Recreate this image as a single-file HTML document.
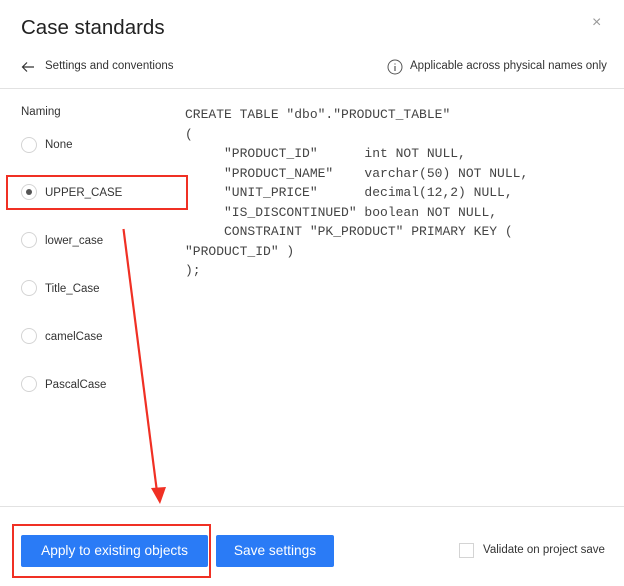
<!DOCTYPE html>
<html><head><meta charset="utf-8"><style>
*{box-sizing:border-box;margin:0;padding:0}
body{width:624px;height:586px;background:#fff;font-family:"Liberation Sans",sans-serif;color:#333;position:relative;overflow:hidden}
.a{position:absolute;white-space:nowrap}
.r{position:absolute;left:21px;width:16px;height:16px;border:1px solid #d4d4d4;border-radius:50%}
.l{position:absolute;left:45px;font-size:11.5px;color:#333}
pre{position:absolute;left:185px;top:105px;font-family:"Liberation Mono",monospace;font-size:13px;line-height:19.5px;color:#444}
.btn{position:absolute;top:535px;height:32px;background:#2a7bf6;color:#fff;font-size:13.7px;border-radius:2px;text-align:center;line-height:32px}
</style></head><body>
<div class="a" style="left:21px;top:16px;font-size:20.5px;color:#222">Case standards</div>
<div class="a" style="left:592px;top:14px;font-size:16px;color:#999">×</div>
<svg class="a" style="left:21px;top:61px" width="14" height="12"><path d="M13 6H2M6 1.5L1.5 6 6 10.5" stroke="#333" stroke-width="1.2" fill="none"/></svg>
<div class="a" style="left:45px;top:60px;font-size:11.5px">Settings and conventions</div>
<svg class="a" style="left:387px;top:59px" width="16" height="16"><circle cx="8" cy="8" r="7" stroke="#555" fill="none"/><path d="M8 7v5M8 4.5v1" stroke="#555" stroke-width="1.2"/></svg>
<div class="a" style="left:410px;top:60px;font-size:11.5px">Applicable across physical names only</div>
<div class="a" style="left:0;top:88px;width:624px;height:1px;background:#e2e2e2"></div>
<div class="a" style="left:21px;top:106px;font-size:11.5px">Naming</div>
<div class="r" style="top:137px"></div><div class="l" style="top:139px">None</div>
<div class="r" style="top:184px"><div style="position:absolute;left:4px;top:4px;width:6px;height:6px;border-radius:50%;background:#555"></div></div><div class="l" style="top:187px">UPPER_CASE</div>
<div class="r" style="top:232px"></div><div class="l" style="top:235px">lower_case</div>
<div class="r" style="top:280px"></div><div class="l" style="top:283px">Title_Case</div>
<div class="r" style="top:328px"></div><div class="l" style="top:331px">camelCase</div>
<div class="r" style="top:376px"></div><div class="l" style="top:379px">PascalCase</div>
<pre>CREATE TABLE "dbo"."PRODUCT_TABLE"
(
     "PRODUCT_ID"      int NOT NULL,
     "PRODUCT_NAME"    varchar(50) NOT NULL,
     "UNIT_PRICE"      decimal(12,2) NULL,
     "IS_DISCONTINUED" boolean NOT NULL,
     CONSTRAINT "PK_PRODUCT" PRIMARY KEY (
"PRODUCT_ID" )
);</pre>
<div class="a" style="left:6px;top:175px;width:182px;height:35px;border:2px solid #f03024"></div>
<div class="a" style="left:0;top:506px;width:624px;height:1px;background:#e2e2e2"></div>
<div class="btn" style="left:21px;width:187px">Apply to existing objects</div>
<div class="btn" style="left:216px;width:118px">Save settings</div>
<div class="a" style="left:12px;top:524px;width:199px;height:54px;border:2px solid #f03024"></div>
<div class="a" style="left:459px;top:543px;width:15px;height:15px;border:1px solid #d4d4d4"></div>
<div class="a" style="left:483px;top:544px;font-size:11.5px">Validate on project save</div>
<svg class="a" style="left:0;top:0" width="624" height="586"><path d="M123.5 229L157 492" stroke="#f03024" stroke-width="2.2"/><path d="M151 488L160 504 166 487Z" fill="#f03024"/></svg>
</body></html>
